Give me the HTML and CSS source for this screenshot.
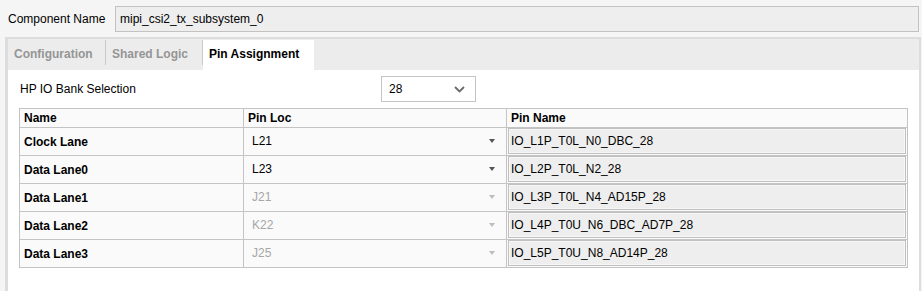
FILE: index.html
```html
<!DOCTYPE html>
<html lang="en">
<head>
    <link rel="stylesheet" href="styles.css">
    <meta charset="UTF-8">
    <title>Pin Assignment</title>
</head>
<body>
    <div class="name-row">
        <label class="name-label">Component Name</label>
        <div class="name-field">mipi_csi2_tx_subsystem_0</div>
    </div>

    <div class="panel">
        <div class="tabs">
            <div class="tab tab-config">Configuration</div>
            <div class="tab tab-shared">Shared Logic</div>
            <div class="tab tab-active">Pin Assignment</div>
        </div>

        <div class="content">
            <div class="bank-row">
                <span class="bank-label">HP IO Bank Selection</span>
                <div class="select">
                    <span>28</span>
                    <svg class="chevron" width="11" height="7" viewBox="0 0 11 7">
                        <polyline points="1,1 5.5,5.5 10,1" fill="none" stroke="#6a6a6a" stroke-width="1.8"/>
                    </svg>
                </div>
            </div>

            <table class="pins">
                <colgroup>
                    <col class="col-name">
                    <col class="col-loc">
                    <col class="col-pin">
                </colgroup>
                <thead>
                    <tr>
                        <th>Name</th>
                        <th>Pin Loc</th>
                        <th>Pin Name</th>
                    </tr>
                </thead>
                <tbody>
                    <tr>
                        <td class="lane">Clock Lane</td>
                        <td><div class="loc"><span>L21</span><span class="arrow"></span></div></td>
                        <td class="pin-cell"><div class="pin-box">IO_L1P_T0L_N0_DBC_28</div></td>
                    </tr>
                    <tr>
                        <td class="lane">Data Lane0</td>
                        <td><div class="loc"><span>L23</span><span class="arrow"></span></div></td>
                        <td class="pin-cell"><div class="pin-box">IO_L2P_T0L_N2_28</div></td>
                    </tr>
                    <tr>
                        <td class="lane">Data Lane1</td>
                        <td><div class="loc disabled"><span>J21</span><span class="arrow"></span></div></td>
                        <td class="pin-cell"><div class="pin-box">IO_L3P_T0L_N4_AD15P_28</div></td>
                    </tr>
                    <tr>
                        <td class="lane">Data Lane2</td>
                        <td><div class="loc disabled"><span>K22</span><span class="arrow"></span></div></td>
                        <td class="pin-cell"><div class="pin-box">IO_L4P_T0U_N6_DBC_AD7P_28</div></td>
                    </tr>
                    <tr>
                        <td class="lane">Data Lane3</td>
                        <td><div class="loc disabled"><span>J25</span><span class="arrow"></span></div></td>
                        <td class="pin-cell"><div class="pin-box">IO_L5P_T0U_N8_AD14P_28</div></td>
                    </tr>
                </tbody>
            </table>
        </div>
    </div>
</body>
</html>
```

FILE: styles.css
```css
body {
    margin: 0;
    background-color: #f5f5f5;
    font-family: "Liberation Sans", Arial, sans-serif;
    font-size: 12px;
    color: #000;
    height: 291px;
    overflow: hidden;
}

.name-row {
    display: flex;
    align-items: center;
    padding: 6px 3px 0 8px;
}

.name-label {
    width: 107px;
}

.name-field {
    flex: 1;
    height: 24px;
    line-height: 24px;
    padding-left: 4px;
    background-color: #eeeeee;
    border: 1px solid #c2c2c2;
}

.panel {
    margin: 5px 1px 0 5px;
    border: 2px solid #dddddd;
    border-left-width: 3px;
    border-bottom: none;
    height: 252px;
    display: flex;
    flex-direction: column;
}

.tabs {
    display: flex;
    align-items: flex-end;
    height: 31px;
    background-color: #ececec;
}

.tab {
    height: 30px;
    line-height: 29px;
    padding-left: 6px;
    box-sizing: border-box;
    font-weight: bold;
    color: #959595;
}

/* thin divider on the right of inactive tabs */
.tab-config,
.tab-shared {
    background: linear-gradient(#c9c9c9, #c9c9c9) right top / 1px 25px no-repeat;
}

.tab-config {
    width: 98px;
}

.tab-shared {
    width: 97px;
}

.tab-active {
    width: 111px;
    background-color: #fff;
    color: #000;
}

.content {
    flex: 1;
    background-color: #fff;
    padding: 6px 12px 0 11px;
}

.bank-row {
    display: flex;
    align-items: center;
}

.bank-label {
    width: 361px;
    padding-left: 1px;
}

.select {
    width: 95px;
    height: 26px;
    box-sizing: border-box;
    border: 1px solid #c4c4c4;
    display: flex;
    align-items: center;
    justify-content: space-between;
    padding: 0 10px 0 7px;
}

.chevron {
    display: block;
}

.pins {
    margin-top: 6px;
    width: 888px;
    border-collapse: collapse;
    table-layout: fixed;
    background-color: #fafafa;
}

.col-name { width: 224px; }
.col-loc { width: 263px; }
.col-pin { width: 401px; }

.pins th,
.pins td {
    border: 1px solid #c4c4c4;
    padding: 0 4px;
    text-align: left;
}

.pins th {
    height: 18px;
    font-weight: bold;
}

.lane {
    font-weight: bold;
    padding-top: 1px;
}

.loc {
    display: flex;
    align-items: center;
    justify-content: space-between;
    padding: 0 7px 2px 4px;
}

.arrow {
    width: 0;
    height: 0;
    border-left: 3.5px solid transparent;
    border-right: 3.5px solid transparent;
    border-top: 4px solid #555;
}

.loc.disabled {
    color: #a6a6a6;
}

.loc.disabled .arrow {
    border-top-color: #bdbdbd;
}

.pins td.pin-cell {
    padding: 0 1px 1px 1px;
    vertical-align: top;
}

.pin-box {
    height: 24px;
    line-height: 24px;
    padding-left: 2px;
    background-color: #eeeeee;
    border: 1px solid #c0c0c0;
    box-shadow: inset 0 0 0 1px #f7f7f7;
}
```
